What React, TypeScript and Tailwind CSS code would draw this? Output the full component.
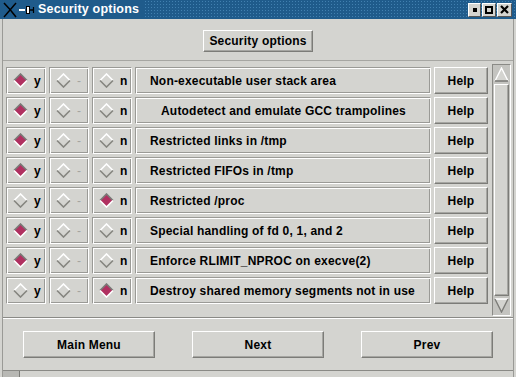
import React from "react"

const rows = [
  { label: "Non-executable user stack area", val: "y", indent: false },
  { label: "Autodetect and emulate GCC trampolines", val: "y", indent: true },
  { label: "Restricted links in /tmp", val: "y", indent: false },
  { label: "Restricted FIFOs in /tmp", val: "y", indent: false },
  { label: "Restricted /proc", val: "n", indent: false },
  { label: "Special handling of fd 0, 1, and 2", val: "y", indent: false },
  { label: "Enforce RLIMIT_NPROC on execve(2)", val: "y", indent: false },
  { label: "Destroy shared memory segments not in use", val: "n", indent: false },
]

const raised =
  "bg-[#d4d4d0] border border-t-white border-l-white border-r-[#7c7c78] border-b-[#7c7c78] shadow-[inset_-1px_-1px_0_#a6a6a2]"
const groove =
  "border border-t-[#9a9a96] border-l-[#9a9a96] border-r-white border-b-white shadow-[inset_1px_1px_0_#fff,inset_-1px_-1px_0_#9a9a96]"

const Diamond = ({ on }: { on: boolean }) => (
  <svg width="15" height="15" viewBox="0 0 15 15" className="shrink-0">
    <polygon points="7.5,1 14,7.5 7.5,14 1,7.5" fill={on ? "#b03060" : "#d4d4d0"} />
    <polyline points="1,7.5 7.5,1 14,7.5" fill="none" stroke={on ? "#7a7a76" : "#ffffff"} strokeWidth="1.6" />
    <polyline points="14,7.5 7.5,14 1,7.5" fill="none" stroke={on ? "#ffffff" : "#85857f"} strokeWidth="1.6" />
  </svg>
)

const Radio = ({ on, text, dim }: { on: boolean; text: string; dim?: boolean }) => (
  <div className={`w-[40px] h-[27px] flex items-center pl-[6px] gap-[6px] ${groove}`}>
    <Diamond on={on} />
    <span className={`text-[12px] font-bold ${dim ? "text-[#a4a4a0] font-normal" : "text-black"}`}>{text}</span>
  </div>
)

const TitleBar = () => (
  <div className="h-[19px] flex items-center bg-[#1f5b8b] bg-[radial-gradient(#4180b0_0.8px,transparent_0.9px)] bg-[length:3px_3px] relative">
    <div className="flex items-center h-full bg-[#1f5b8b] pr-[6px]">
      <svg width="36" height="19" viewBox="0 0 36 19" className="shrink-0">
        <path d="M4 3 Q10 9 16 17" stroke="#000" strokeWidth="1.6" fill="none" />
        <path d="M16 3 Q10 10 4 17" stroke="#000" strokeWidth="1.4" fill="none" />
        <line x1="19" y1="10" x2="25" y2="10" stroke="#fff" strokeWidth="2" />
        <rect x="26.5" y="6.5" width="3" height="7" fill="#fff" stroke="#000" strokeWidth="1" />
        <line x1="30" y1="10" x2="33" y2="10" stroke="#000" strokeWidth="1.5" />
        <line x1="33.5" y1="7" x2="33.5" y2="13" stroke="#000" strokeWidth="1.2" />
      </svg>
      <span className="ml-[2px] text-[12.5px] font-bold text-white">Security options</span>
    </div>
    <div className="ml-auto flex items-center gap-[1px] pr-[4px]">
      <div className="w-[13px] h-[14px] bg-[#d4d4d0] border border-t-white border-l-white border-r-[#555] border-b-[#555] flex items-center justify-center">
        <div className="w-[4px] h-[4px] bg-black" />
      </div>
      <div className="w-[14px] h-[14px] bg-[#d4d4d0] border border-t-white border-l-white border-r-[#555] border-b-[#555] flex items-center justify-center">
        <div className="w-[8px] h-[8px] border-2 border-black" />
      </div>
      <div className="w-[15px] h-[14px] bg-[#d4d4d0] border border-t-white border-l-white border-r-[#555] border-b-[#555] flex items-center justify-center">
        <svg width="9" height="9" viewBox="0 0 9 9">
          <path d="M1 1 L8 8 M8 1 L1 8" stroke="#000" strokeWidth="2.2" />
        </svg>
      </div>
    </div>
  </div>
)

const Scrollbar = () => (
  <div className="w-[19px] h-[252px] flex flex-col border border-t-[#8a8a86] border-l-[#8a8a86] border-r-white border-b-white bg-[#c4c4c0] p-[1px]">
    <svg width="15" height="16" viewBox="0 0 15 16" className="shrink-0 mt-[1px]">
      <polygon points="7.5,1 14,14 1,14" fill="#d4d4d0" />
      <polyline points="1,14 7.5,1 14,14" fill="none" stroke="#fff" strokeWidth="1.4" />
      <line x1="1" y1="14" x2="14" y2="14" stroke="#7c7c78" strokeWidth="1.6" />
    </svg>
    <div className={`flex-1 my-[1px] ${raised}`} />
    <svg width="15" height="16" viewBox="0 0 15 16" className="shrink-0 mb-[1px]">
      <polygon points="1,2 14,2 7.5,15" fill="#d4d4d0" />
      <line x1="1" y1="2" x2="14" y2="2" stroke="#fff" strokeWidth="1.6" />
      <polyline points="1,2 7.5,15 14,2" fill="none" stroke="#7c7c78" strokeWidth="1.4" />
    </svg>
  </div>
)

export default function App() {
  return (
    <div className="w-[516px] h-[377px] bg-[#d4d4d0] overflow-hidden flex flex-col font-['Liberation_Sans',Arial,sans-serif] text-black tracking-[0.2px]">
      <TitleBar />
      <div className="flex-1 flex flex-col mx-[2px] border-x border-[#9a9a96]">
        {/* Header button */}
        <div className="flex justify-center pt-[11px]">
          <div className={`w-[110px] h-[22px] flex items-center justify-center text-[12px] font-bold ${raised}`}>
            Security options
          </div>
        </div>

        {/* Option rows + scrollbar */}
        <div className="mt-[8px] border-t border-[#a6a6a2] pt-[3px] flex">
          <div className="flex flex-col gap-[3px] pl-[3px] pt-[3px]">
            {rows.map((r) => (
              <div key={r.label} className="flex gap-[3px]">
                <Radio on={r.val === "y"} text="y" />
                <Radio on={false} text="-" dim />
                <Radio on={r.val === "n"} text="n" />
                <div
                  className={`w-[296px] h-[27px] flex items-center text-[12px] font-bold ${groove} ${
                    r.indent ? "pl-[25px]" : "pl-[14px]"
                  }`}
                >
                  {r.label}
                </div>
                <div className={`w-[54px] h-[27px] flex items-center justify-center text-[12px] font-bold ${raised}`}>
                  Help
                </div>
              </div>
            ))}
          </div>
          <div className="ml-[4px]">
            <Scrollbar />
          </div>
        </div>

        {/* Bottom buttons */}
        <div className="mt-[1px] border-t border-t-[#8a8a86] shadow-[inset_0_1px_0_#fff] flex justify-between px-[20px] pt-[13px]">
          {["Main Menu", "Next", "Prev"].map((b) => (
            <div key={b} className={`w-[132px] h-[27px] flex items-center justify-center text-[12px] font-bold ${raised}`}>
              {b}
            </div>
          ))}
        </div>

        <div className="mt-auto h-[7px] border-t border-[#8a8a86] flex">
          <div className="w-[17px] h-full bg-[#b8b8b4] border-r border-[#7c7c78]" />
        </div>
      </div>
    </div>
  )
}
